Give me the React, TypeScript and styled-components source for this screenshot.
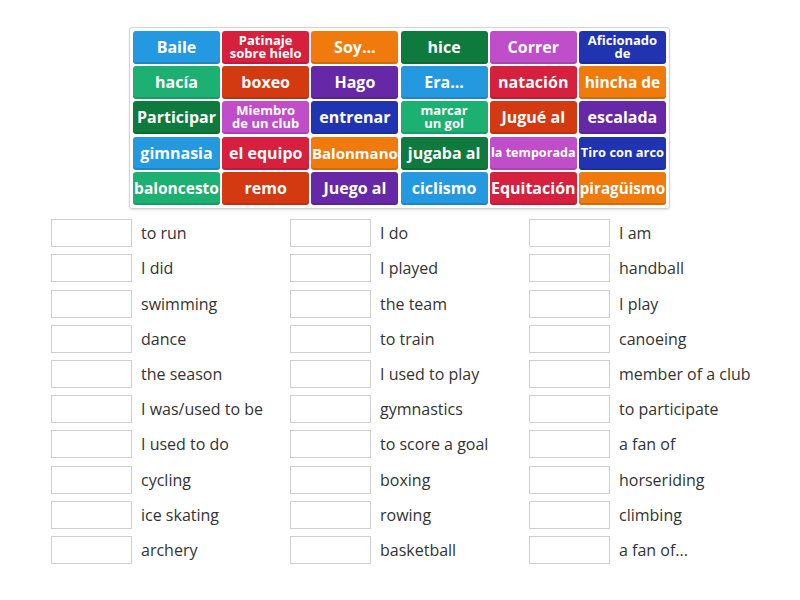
import React from 'react';
import styled, { createGlobalStyle } from 'styled-components';

const PALETTE = [
    '#2499e0', // blue
    '#d6203e', // red
    '#f07a0c', // orange
    '#0e7a3d', // green
    '#c04dc9', // pink
    '#2034b2', // navy
    '#1cb173', // teal
    '#d43a12', // brick
    '#6628a6', // purple
];

type Tile = { text: string; size?: number };

// two-line tiles carry their own break
const TILES: Tile[] = [
    { text: 'Baile' },
    { text: 'Patinaje\nsobre hielo', size: 13 },
    { text: 'Soy...' },
    { text: 'hice' },
    { text: 'Correr' },
    { text: 'Aficionado\nde', size: 13 },
    { text: 'hacía' },
    { text: 'boxeo' },
    { text: 'Hago' },
    { text: 'Era...' },
    { text: 'natación' },
    { text: 'hincha de', size: 15.5 },
    { text: 'Participar' },
    { text: 'Miembro\nde un club', size: 13 },
    { text: 'entrenar' },
    { text: 'marcar\nun gol', size: 13 },
    { text: 'Jugué al' },
    { text: 'escalada' },
    { text: 'gimnasia' },
    { text: 'el equipo' },
    { text: 'Balonmano', size: 15 },
    { text: 'jugaba al' },
    { text: 'la temporada', size: 12.6 },
    { text: 'Tiro con arco', size: 12.9 },
    { text: 'baloncesto', size: 15.5 },
    { text: 'remo' },
    { text: 'Juego al' },
    { text: 'ciclismo' },
    { text: 'Equitación' },
    { text: 'piragüismo', size: 15.2 },
];

const ANSWERS = [
    ['to run', 'I did', 'swimming', 'dance', 'the season', 'I was/used to be', 'I used to do', 'cycling', 'ice skating', 'archery'],
    ['I do', 'I played', 'the team', 'to train', 'I used to play', 'gymnastics', 'to score a goal', 'boxing', 'rowing', 'basketball'],
    ['I am', 'handball', 'I play', 'canoeing', 'member of a club', 'to participate', 'a fan of', 'horseriding', 'climbing', 'a fan of...'],
];

const GlobalStyle = createGlobalStyle`
    body {
        margin: 0;
        background: #fff;
        font-family: 'Open Sans', 'Liberation Sans', sans-serif;
    }
`;

const Page = styled.div`
    width: 800px;
    height: 600px;
    display: flex;
    flex-direction: column;
    align-items: flex-start;
`;

const TilePanel = styled.div`
    margin: 27px 0 0 129px;
    width: 533px;
    padding: 3px;
    border: 1px solid #d4d4d4;
    border-radius: 3px;
    box-shadow: 0 1px 2px rgba(0, 0, 0, 0.12);
    display: grid;
    grid-template-columns: repeat(6, 87px);
    grid-auto-rows: 33px;
    column-gap: 2.2px;
    row-gap: 2.2px;
`;

const TileBox = styled.div<{ $bg: string; $size: number }>`
    background: ${(p) => p.$bg};
    border-radius: 3px;
    box-shadow: inset 0 -2px 0 rgba(0, 0, 0, 0.12);
    color: #fff;
    font-weight: 700;
    font-size: ${(p) => p.$size}px;
    line-height: ${(p) => (p.$size < 14 ? 13 : 18)}px;
    text-align: center;
    display: flex;
    align-items: center;
    justify-content: center;
    padding: 0 1px 1px;
    white-space: pre-line;
    overflow: hidden;
`;

const AnswerGrid = styled.div`
    margin: 11px 0 0 51px;
    display: grid;
    grid-template-columns: repeat(3, 239px);
`;

const AnswerColumn = styled.div`
    display: flex;
    flex-direction: column;
    gap: 8.2px;
`;

const AnswerRow = styled.div`
    display: flex;
    align-items: center;
    height: 27px;
`;

const DropSlot = styled.div`
    width: 79px;
    height: 26px;
    border: 1px solid #cfcfcf;
    background: #fff;
    flex-shrink: 0;
`;

const Label = styled.span`
    margin-left: 9px;
    font-size: 16px;
    color: #333;
    white-space: nowrap;
`;

const App = () => {
    return (
        <Page>
            <GlobalStyle />
            <TilePanel>
                {TILES.map((tile, i) => (
                    <TileBox key={tile.text} $bg={PALETTE[i % PALETTE.length]} $size={tile.size ?? 16}>
                        {tile.text}
                    </TileBox>
                ))}
            </TilePanel>
            <AnswerGrid>
                {ANSWERS.map((col, c) => (
                    <AnswerColumn key={c}>
                        {col.map((label) => (
                            <AnswerRow key={label}>
                                <DropSlot />
                                <Label>{label}</Label>
                            </AnswerRow>
                        ))}
                    </AnswerColumn>
                ))}
            </AnswerGrid>
        </Page>
    );
};

export default App;
